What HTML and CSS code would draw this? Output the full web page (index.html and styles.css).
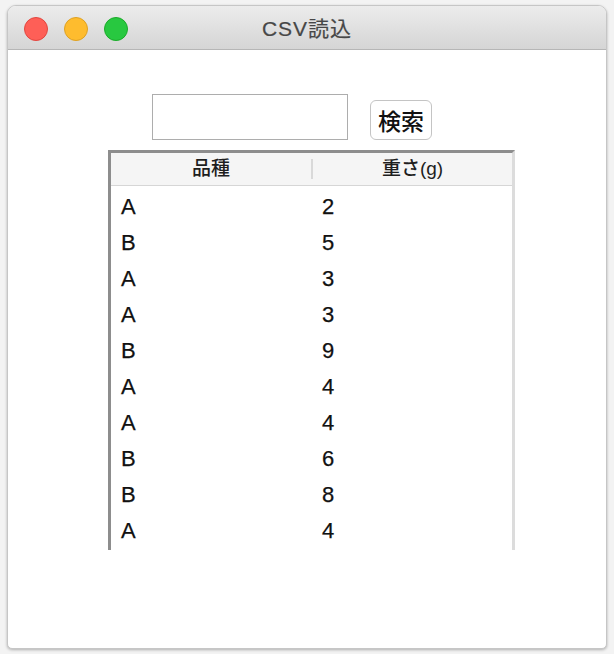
FILE: index.html
```html
<!DOCTYPE html>
<html lang="ja">
<head>
<meta charset="utf-8">
<title>CSV読込</title>
<link rel="stylesheet" href="styles.css">
</head>
<body>
<div class="window">
  <div class="titlebar">
    <div class="lights">
      <span class="light red"></span>
      <span class="light yellow"></span>
      <span class="light green"></span>
    </div>
    <div class="title">CSV読込</div>
    <div class="spacer"></div>
  </div>
  <div class="content">
    <div class="search-row">
      <input class="search-input" type="text">
      <button class="search-btn">検索</button>
    </div>
    <div class="table">
      <div class="thead">
        <div class="th">品種</div>
        <div class="sep"></div>
        <div class="th">重さ(g)</div>
      </div>
      <div class="tbody">
        <div class="td c1">A</div><div class="td c2">2</div>
        <div class="td c1">B</div><div class="td c2">5</div>
        <div class="td c1">A</div><div class="td c2">3</div>
        <div class="td c1">A</div><div class="td c2">3</div>
        <div class="td c1">B</div><div class="td c2">9</div>
        <div class="td c1">A</div><div class="td c2">4</div>
        <div class="td c1">A</div><div class="td c2">4</div>
        <div class="td c1">B</div><div class="td c2">6</div>
        <div class="td c1">B</div><div class="td c2">8</div>
        <div class="td c1">A</div><div class="td c2">4</div>
      </div>
    </div>
  </div>
</div>
</body>
</html>
```
FILE: styles.css
```css
html, body {
  margin: 0;
  padding: 0;
}
body {
  background: #f3f3f3;
  font-family: "Liberation Sans", "Noto Sans CJK JP", sans-serif;
  width: 614px;
  height: 654px;
  overflow: hidden;
}
.window {
  box-sizing: border-box;
  margin: 5px 0 0 7px;
  width: 600px;
  height: 644px;
  border: 1px solid #c6c6c6;
  border-radius: 9px 9px 5px 5px;
  background: #ffffff;
  overflow: hidden;
  box-shadow: 0 1px 3px rgba(0, 0, 0, 0.28);
}
.titlebar {
  height: 43px;
  border-bottom: 1px solid #b6b6b6;
  background: linear-gradient(#ececec, #d5d5d5);
  display: grid;
  grid-template-columns: 1fr auto 1fr;
  align-items: start;
}
.lights {
  display: flex;
  gap: 16px;
  padding: 11px 0 0 16px;
}
.light {
  width: 24px;
  height: 24px;
  border-radius: 50%;
  box-sizing: border-box;
}
.red { background: #fe5f57; border: 1px solid #e2463f; }
.yellow { background: #febc2e; border: 1px solid #dea123; }
.green { background: #28c840; border: 1px solid #1aab29; }
.title {
  padding-top: 11px;
  font-size: 21px;
  line-height: 24px;
  letter-spacing: 1px;
  color: #474747;
  -webkit-text-stroke: 0.2px #474747;
}
.content {
  padding-top: 44px;
}
.search-row {
  display: flex;
  align-items: flex-end;
  margin-left: 144px;
}
.search-input {
  box-sizing: border-box;
  width: 196px;
  height: 46px;
  margin: 0;
  border: 1px solid #adadad;
  background: #fff;
  outline: none;
}
.search-btn {
  box-sizing: border-box;
  margin: 0 0 0 22px;
  width: 62px;
  height: 40px;
  padding: 0;
  border: 1px solid #c4c4c4;
  border-radius: 6px;
  background: #fff;
  color: #111;
  font-family: "Noto Sans CJK JP", sans-serif;
  font-weight: 500;
  font-size: 23px;
  line-height: 36px;
}
.table {
  box-sizing: border-box;
  margin: 10px 0 0 100px;
  width: 407px;
  height: 400px;
  border-top: 3px solid #8d8d8d;
  border-left: 3px solid #8d8d8d;
  border-right: 3px solid #dcdcdc;
}
.thead {
  display: grid;
  grid-template-columns: 200px 2px 199px;
  align-items: center;
  height: 32px;
  background: #f5f5f5;
  border-bottom: 1px solid #d6d6d6;
}
.th {
  text-align: center;
  font-family: "Liberation Sans", "Noto Sans CJK JP", sans-serif;
  font-weight: 500;
  font-size: 19px;
  line-height: 32px;
  color: #1e1e1e;
}
.sep {
  height: 20px;
  background: #d9d9d9;
}
.tbody {
  display: grid;
  grid-template-columns: 201px 200px;
  grid-auto-rows: 36px;
  padding-top: 3px;
}
.td {
  font-size: 22px;
  line-height: 36px;
  color: #111;
  padding-left: 10px;
  -webkit-text-stroke: 0.25px #111;
}
```
